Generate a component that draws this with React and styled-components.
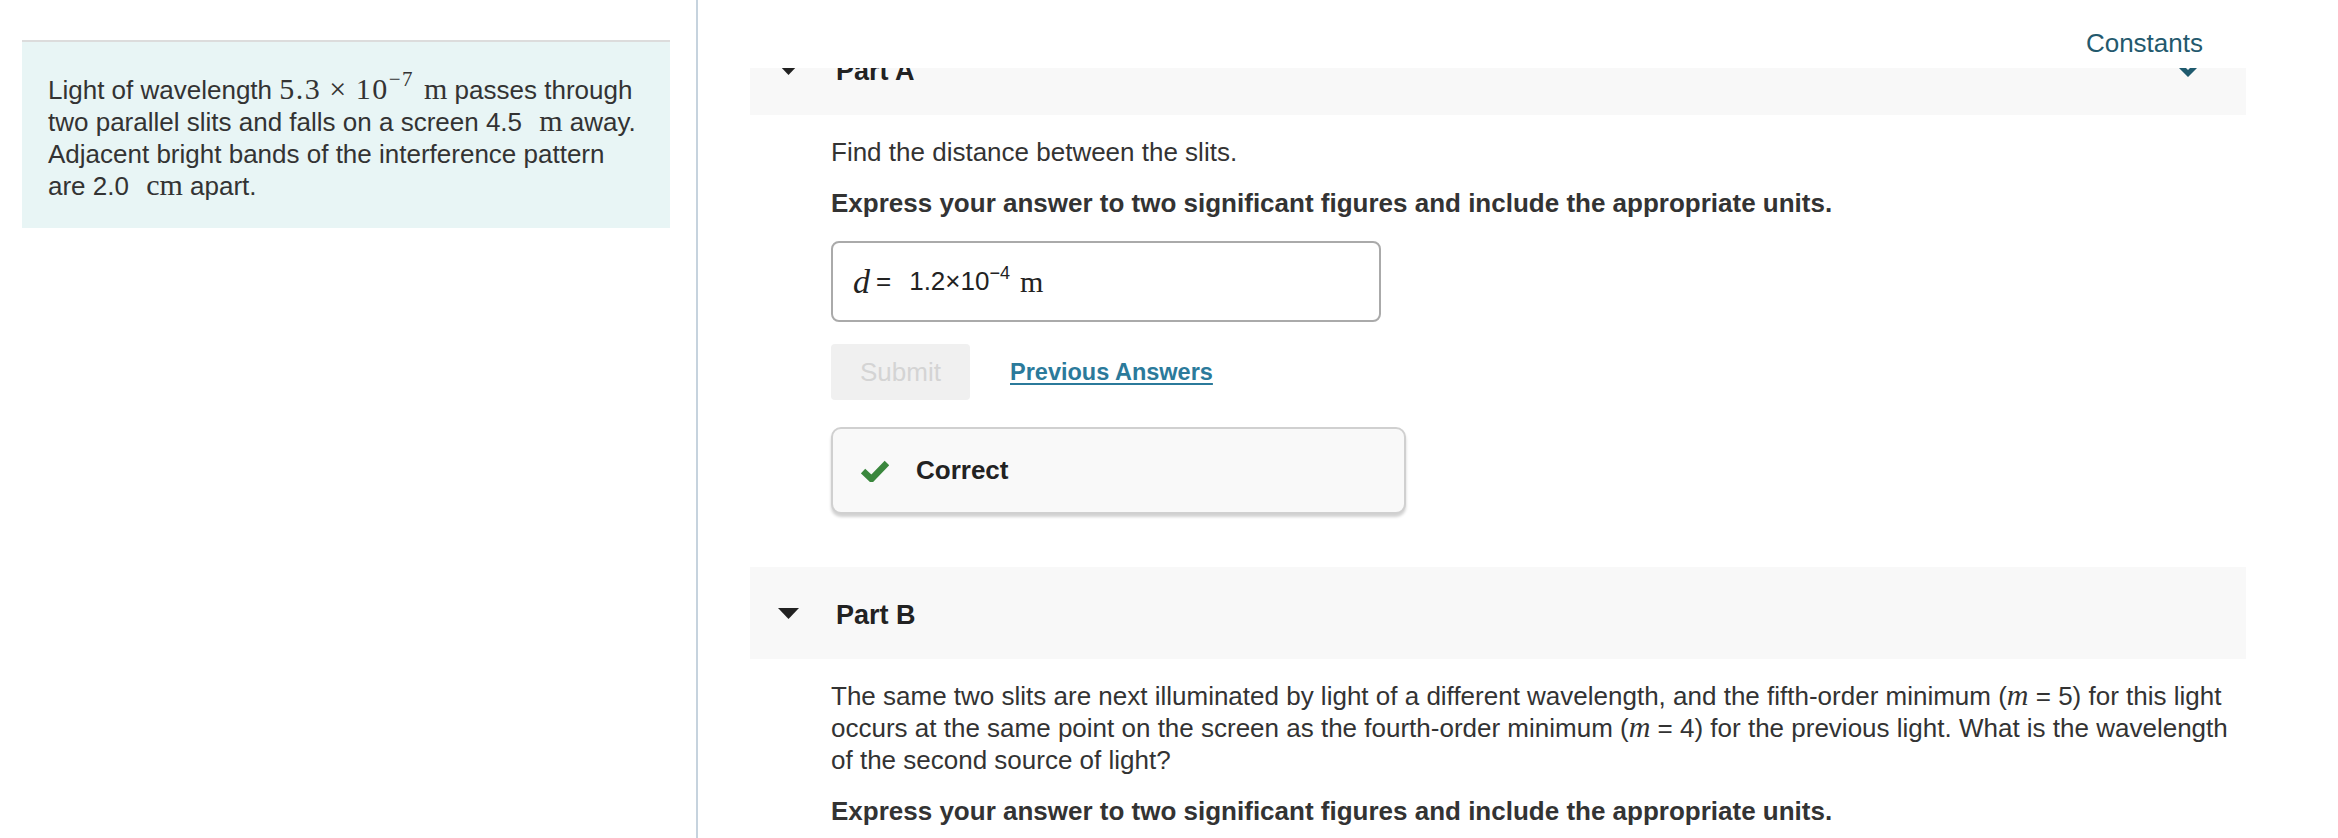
import styled, { createGlobalStyle } from 'styled-components'

const GlobalStyle = createGlobalStyle`
    *, *::before, *::after {
        box-sizing: border-box;
    }
    html, body {
        margin: 0;
        padding: 0;
        background: #fff;
    }
    body {
        font-family: "Liberation Sans", Arial, sans-serif;
        color: #333;
    }
`

const Page = styled.div`
    display: flex;
    height: 838px;
    overflow: hidden;
`

const LeftColumn = styled.aside`
    width: 698px;
    flex-shrink: 0;
    border-right: 2px solid #c6d3de;
    padding: 40px 26px 0 22px;
`

const IntroBox = styled.div`
    border-top: 2px solid #dcdcdc;
    background: #e8f5f5;
    padding: 32px 22px 26px 26px;
    font-size: 26px;
    line-height: 32px;
`

const RightColumn = styled.main`
    flex: 1;
    display: flex;
    flex-direction: column;
    min-width: 0;
`

const TopBar = styled.div`
    height: 68px;
    flex-shrink: 0;
    display: flex;
    justify-content: flex-end;
    padding: 27px 135px 0 0;
`

const ConstantsLink = styled.a`
    font-size: 26px;
    line-height: 32px;
    color: #23596d;
    text-decoration: none;
    cursor: pointer;
`

const Scroller = styled.div`
    flex: 1;
    overflow: hidden;
    padding: 0 92px 0 52px;
`

const ScrollContent = styled.div`
    margin-top: -45px;
`

const PartHeader = styled.div`
    height: 92px;
    background: #f8f8f8;
    display: flex;
    align-items: center;
    padding-left: 28px;
`

const PartTitle = styled.h2`
    margin: 4px 0 0 37px;
    font-size: 27px;
    line-height: 32px;
    font-weight: 700;
    color: #222;
`

const CollapseIcon = styled.svg`
    margin-left: auto;
    margin-right: 46px;
    align-self: flex-start;
    margin-top: 30px;
`

const PartBody = styled.div`
    padding: 21px 0 ${ props => props.$bottom || 0 }px 81px;
`

const Prompt = styled.p`
    margin: 0;
    font-size: 26px;
    line-height: 32px;
`

const Instruction = styled.p`
    margin: 19px 0 0;
    font-size: 26px;
    line-height: 32px;
    font-weight: 700;
`

const AnswerBox = styled.div`
    margin-top: 22px;
    width: 550px;
    height: 81px;
    border: 2px solid #aaa;
    border-radius: 8px;
    display: flex;
    align-items: center;
    padding-left: 20px;
    font-size: 26px;
    color: #222;
`

const VarD = styled.span`
    font-family: "Liberation Serif", "Times New Roman", serif;
    font-style: italic;
    font-size: 34px;
    line-height: 1;
`

const Equals = styled.span`
    margin: 0 18px 0 6px;
`

const SupSans = styled.sup`
    font-size: 18px;
    line-height: 0;
    vertical-align: 11px;
`

const SerifUnit = styled.span`
    font-family: "Liberation Serif", "Times New Roman", serif;
    font-size: 30px;
    line-height: 1;
    margin-left: 10px;
`

const ButtonRow = styled.div`
    margin-top: 22px;
    display: flex;
    align-items: center;
`

const SubmitButton = styled.button`
    width: 139px;
    height: 56px;
    border: none;
    border-radius: 4px;
    background: #f0f0f0;
    color: #d4d4d4;
    font-family: "Liberation Sans", Arial, sans-serif;
    font-size: 26px;
    padding: 0;
`

const PrevLink = styled.a`
    margin-left: 40px;
    font-size: 23.5px;
    font-weight: 700;
    color: #2b7a9b;
    text-decoration: underline;
    text-decoration-thickness: 2px;
    text-underline-offset: 3px;
    cursor: pointer;
`

const Feedback = styled.div`
    margin-top: 27px;
    width: 575px;
    height: 87px;
    border: 2px solid #d0d0d0;
    border-radius: 10px;
    background: #f9f9f9;
    box-shadow: 0 3px 3px rgba(0, 0, 0, 0.18);
    display: flex;
    align-items: center;
    gap: 27px;
    padding-left: 28px;
`

const FeedbackText = styled.span`
    font-size: 26px;
    font-weight: 700;
    color: #222;
`

const MathText = styled.span`
    font-family: "Liberation Serif", "Times New Roman", serif;
    font-size: 30px;
    line-height: 1;
    letter-spacing: 1.5px;
`

const MathOp = styled.span`
    margin: 0 8px;
`

const MathSup = styled.sup`
    font-size: 21px;
    line-height: 0;
    vertical-align: 13px;
`

const MathUnit = styled.span`
    font-family: "Liberation Serif", "Times New Roman", serif;
    font-size: 30px;
    line-height: 1;
    margin-left: ${ props => props.$gap || 10 }px;
`

const MathVar = styled.i`
    font-family: "Liberation Serif", "Times New Roman", serif;
    font-size: 30px;
    line-height: 1;
`

const Caret = () => (
    <svg width="21" height="11" viewBox="0 0 21 11">
        <path d="M0 0 H21 L10.5 11 Z" fill="#222" />
    </svg>
)

const CheckIcon = () => (
    <svg width="28" height="22" viewBox="0 0 28 22">
        <path d="M2 11 L10.5 19 L26 3" fill="none" stroke="#3a873d" strokeWidth="6.5" />
    </svg>
)

const PartHead = ({ title, collapsible }) => (
    <PartHeader>
        <Caret />
        <PartTitle>{ title }</PartTitle>
        { collapsible && (
            <CollapseIcon width="24" height="24" viewBox="0 0 24 24">
                <polygon points="2,14 12,24 22,14 18.5,10.5 12,17 5.5,10.5" fill="#1f5a6e" />
            </CollapseIcon>
        ) }
    </PartHeader>
)

const App = () => {
    return (
        <>
            <GlobalStyle />
            <Page>
                <LeftColumn>
                    <IntroBox>
                        Light of wavelength{' '}
                        <MathText>5.3<MathOp>×</MathOp>10<MathSup>−7</MathSup></MathText>
                        <MathUnit $gap={10}>m</MathUnit> passes through two parallel slits and falls on a
                        screen 4.5 <MathUnit>m</MathUnit> away. Adjacent bright bands of the interference
                        pattern are 2.0 <MathUnit>cm</MathUnit> apart.
                    </IntroBox>
                </LeftColumn>
                <RightColumn>
                    <TopBar>
                        <ConstantsLink>Constants</ConstantsLink>
                    </TopBar>
                    <Scroller>
                        <ScrollContent>
                            <section>
                                <PartHead title="Part A" collapsible />
                                <PartBody $bottom={53}>
                                    <Prompt>Find the distance between the slits.</Prompt>
                                    <Instruction>Express your answer to two significant figures and include the appropriate units.</Instruction>
                                    <AnswerBox>
                                        <VarD>d</VarD>
                                        <Equals>=</Equals>
                                        <span>1.2×10<SupSans>−4</SupSans></span>
                                        <SerifUnit>m</SerifUnit>
                                    </AnswerBox>
                                    <ButtonRow>
                                        <SubmitButton disabled>Submit</SubmitButton>
                                        <PrevLink>Previous Answers</PrevLink>
                                    </ButtonRow>
                                    <Feedback>
                                        <CheckIcon />
                                        <FeedbackText>Correct</FeedbackText>
                                    </Feedback>
                                </PartBody>
                            </section>
                            <section>
                                <PartHead title="Part B" />
                                <PartBody>
                                    <Prompt>
                                        The same two slits are next illuminated by light of a different wavelength, and
                                        the fifth-order minimum (<MathVar>m</MathVar> = 5) for this light occurs at the
                                        same point on the screen as the fourth-order minimum (<MathVar>m</MathVar> = 4)
                                        for the previous light. What is the wavelength of the second source of light?
                                    </Prompt>
                                    <Instruction>Express your answer to two significant figures and include the appropriate units.</Instruction>
                                </PartBody>
                            </section>
                        </ScrollContent>
                    </Scroller>
                </RightColumn>
            </Page>
        </>
    )
}

export default App
